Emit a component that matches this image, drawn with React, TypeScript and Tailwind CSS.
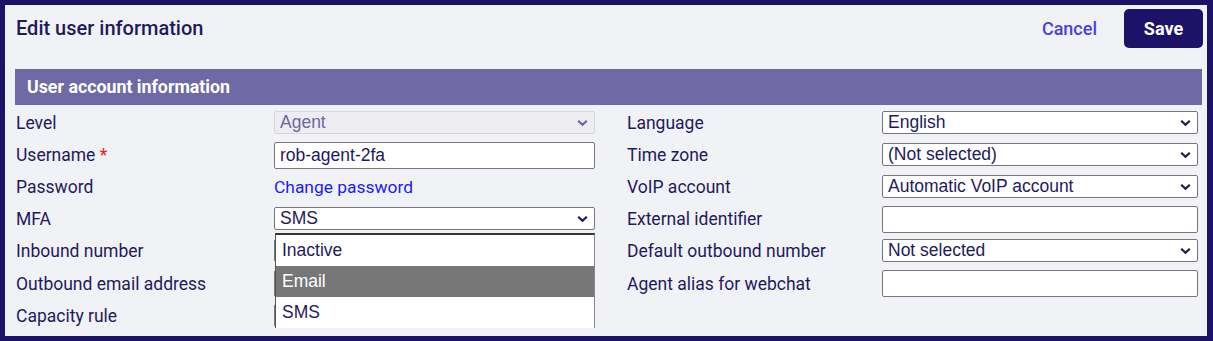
import { useState } from "react";

const navy = "text-[#1f1a5c]";

function Chevron({ muted = false }: { muted?: boolean }) {
  return (
    <svg
      width="11"
      height="7"
      viewBox="0 0 11 7"
      className="pointer-events-none absolute right-[7px] top-1/2 -translate-y-1/2"
    >
      <path
        d="M1.2 1.2 L5.5 5.3 L9.8 1.2"
        fill="none"
        stroke={muted ? "#6c67a0" : "#1f1a5c"}
        strokeWidth="2.2"
      />
    </svg>
  );
}

function Select({ value, disabled = false }: { value: string; disabled?: boolean }) {
  return (
    <div className="relative w-full">
      <select
        value={value}
        disabled={disabled}
        onChange={() => {}}
        className={
          disabled
            ? "h-[23px] w-full appearance-none rounded-[2px] border border-[#d6d6de] bg-[#ededf1] pl-[5px] font-['Liberation_Sans',Arial,sans-serif] text-[17.5px] leading-[21px] text-[#6c689a] outline-none"
            : `h-[23px] w-full appearance-none rounded-[2px] border border-[#777] bg-white pl-[5px] font-['Liberation_Sans',Arial,sans-serif] text-[17.5px] leading-[21px] ${navy} outline-none`
        }
      >
        <option>{value}</option>
      </select>
      <Chevron muted={disabled} />
    </div>
  );
}

function TextInput({ value = "" }: { value?: string }) {
  return (
    <input
      defaultValue={value}
      className={`h-[27px] w-full rounded-[2px] border border-[#777] bg-white pl-[5px] font-['Liberation_Sans',Arial,sans-serif] text-[17.5px] ${navy} outline-none`}
    />
  );
}

function Label({ children }: { children: React.ReactNode }) {
  return <div className={`text-[17.5px] leading-[24px] ${navy}`}>{children}</div>;
}

export default function App() {
  const [mfa] = useState("SMS");
  const options = ["Inactive", "Email", "SMS"];

  return (
    <div className="h-[341px] w-[1213px] overflow-hidden border-b-[5px] border-l-[5px] border-r-[6px] border-t-[5px] border-[#1e1268] bg-[#f1f2f6] font-['Roboto','Noto_Sans',sans-serif]">
      <div className="flex h-[64px] items-start justify-between pl-[11px] pr-[4px]">
        <h1 className={`mt-[8px] text-[20px] font-medium leading-[30px] ${navy}`}>
          Edit user information
        </h1>
        <div className="mt-[4px] flex items-center">
          <button type="button" className="mr-[27px] text-[18px] font-medium text-[#4c3fe2]">
            Cancel
          </button>
          <button
            type="button"
            className="h-[39px] w-[79px] rounded-[5px] bg-[#1e1268] text-[18px] font-bold text-white"
          >
            Save
          </button>
        </div>
      </div>

      <div className="ml-[10px] mr-[5px] flex h-[36px] items-center bg-[#6f69a6] pl-[12px] text-[17.8px] font-bold text-white">
        User account information
      </div>

      <div className="relative mt-[2px] grid grid-cols-[258px_321px_32px_255px_316px] pl-[11px]">
        {/* row 1 */}
        <div className="flex h-[32px] items-center"><Label>Level</Label></div>
        <div className="flex h-[32px] items-center"><Select value="Agent" disabled /></div>
        <div />
        <div className="flex h-[32px] items-center"><Label>Language</Label></div>
        <div className="flex h-[32px] items-center"><Select value="English" /></div>

        {/* row 2 */}
        <div className="flex h-[32px] items-center">
          <Label>
            Username <span className="text-[#e0201b]">*</span>
          </Label>
        </div>
        <div className="flex h-[32px] items-center"><TextInput value="rob-agent-2fa" /></div>
        <div />
        <div className="flex h-[32px] items-center"><Label>Time zone</Label></div>
        <div className="flex h-[32px] items-center"><Select value="(Not selected)" /></div>

        {/* row 3 */}
        <div className="flex h-[32px] items-center"><Label>Password</Label></div>
        <div className="flex h-[32px] items-center">
          <a href="#" className="text-[17.4px] text-[#1a1aff]">Change password</a>
        </div>
        <div />
        <div className="flex h-[32px] items-center"><Label>VoIP account</Label></div>
        <div className="flex h-[32px] items-center"><Select value="Automatic VoIP account" /></div>

        {/* row 4 */}
        <div className="flex h-[32px] items-center"><Label>MFA</Label></div>
        <div className="flex h-[32px] items-center"><Select value={mfa} /></div>
        <div />
        <div className="flex h-[32px] items-center"><Label>External identifier</Label></div>
        <div className="flex h-[32px] items-center"><TextInput /></div>

        {/* row 5 */}
        <div className="flex h-[32px] items-center"><Label>Inbound number</Label></div>
        <div className="flex h-[32px] items-center"><Select value="" /></div>
        <div />
        <div className="flex h-[32px] items-center"><Label>Default outbound number</Label></div>
        <div className="flex h-[32px] items-center"><Select value="Not selected" /></div>

        {/* row 6 */}
        <div className="flex h-[33px] items-center"><Label>Outbound email address</Label></div>
        <div className="flex h-[33px] items-center"><TextInput /></div>
        <div />
        <div className="flex h-[33px] items-center"><Label>Agent alias for webchat</Label></div>
        <div className="flex h-[33px] items-center"><TextInput /></div>

        {/* row 7 */}
        <div className="flex h-[32px] items-center"><Label>Capacity rule</Label></div>
        <div className="flex h-[32px] items-center"><Select value="" /></div>
        <div />
        <div />
        <div />

        {/* open MFA list */}
        <div className="absolute left-[270px] top-[126px] w-[320px] border-l border-r border-t-2 border-l-[#555] border-r-[#888] border-t-[#333] bg-white font-['Liberation_Sans',Arial,sans-serif] text-[17.5px]">
          {options.map((o) => (
            <div
              key={o}
              className={
                o === "Email"
                  ? "flex h-[31px] items-center bg-[#777] pl-[6px] text-white"
                  : `flex h-[31px] items-center pl-[6px] ${navy}`
              }
            >
              {o}
            </div>
          ))}
        </div>
      </div>
    </div>
  );
}
